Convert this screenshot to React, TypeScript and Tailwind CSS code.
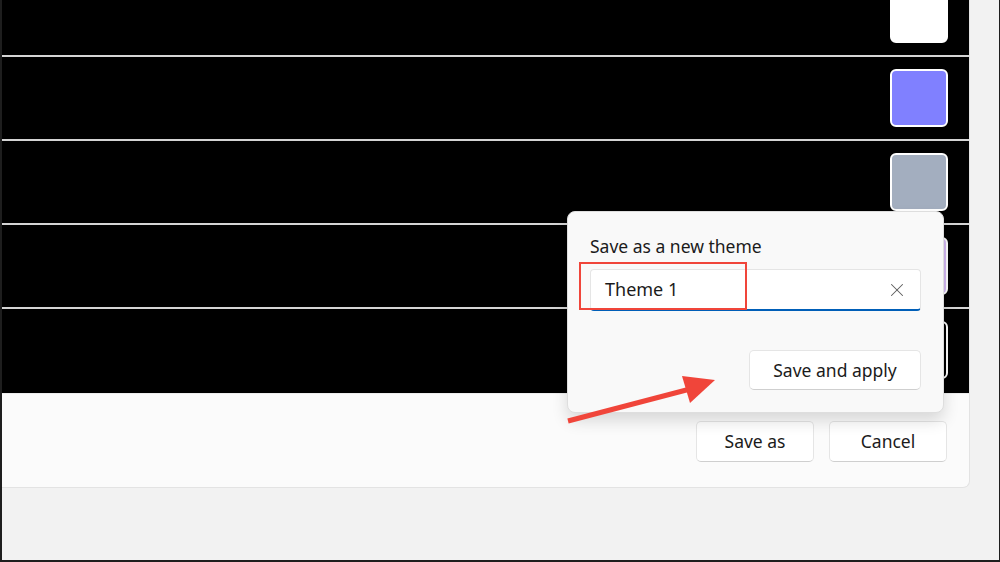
import { X } from 'lucide-react';

const swatches = ['#ffffff', '#8080ff', '#a3aebf', '#d3b8f3', '#000000'];

function Swatch({ color }: { color: string }) {
  return (
    <div
      className="w-[58px] h-[58px] shrink-0 rounded-[6px] border-2 border-white shadow-[0_1px_1px_rgba(0,0,0,0.25)]"
      style={{ backgroundColor: color }}
    />
  );
}

function Button({ label, className = '' }: { label: string; className?: string }) {
  return (
    <button
      className={`flex items-center justify-center bg-white rounded-[5px] border border-[#e5e5e5] border-b-[#cfcfcf] text-[17.5px] text-[#1b1b1b] ${className}`}
    >
      {label}
    </button>
  );
}

export default function App() {
  return (
    <div
      className="relative w-[1000px] h-[562px] overflow-hidden bg-[#f2f2f2] border-l-2 border-r border-b-2 border-[#1e1e1e] flex flex-col"
      style={{ fontFamily: '"Segoe UI", "Noto Sans", sans-serif' }}
    >
      {/* Content panel */}
      <div className="w-[968px] h-[488px] shrink-0 flex flex-col bg-[#fbfbfb] border-r border-b border-[#e3e3e3] rounded-br-[7px] overflow-hidden">
        {/* Swatch rows */}
        <div className="h-[393px] shrink-0 bg-black flex flex-col">
          <div className="h-[55px] shrink-0 flex items-end justify-end pr-[21px] pb-[12px]">
            <Swatch color={swatches[0]} />
          </div>
          {swatches.slice(1).map((c, i) => (
            <div key={c} className="flex flex-col">
              <div className="h-[2px] bg-[#d4d4d4]" />
              <div className={`${i === 3 ? 'h-[83px]' : 'h-[82px]'} flex items-start justify-end pr-[21px] pt-[12px]`}>
                <Swatch color={c} />
              </div>
            </div>
          ))}
        </div>

        {/* Footer */}
        <div className="flex-1 border-t border-[#ececec] flex justify-end gap-[15px] pt-[27px] pr-[22px]">
          <Button label="Save as" className="w-[118px] h-[41px]" />
          <Button label="Cancel" className="w-[118px] h-[41px]" />
        </div>
      </div>

      {/* Save as flyout */}
      <div className="absolute left-[565px] top-[211px] w-[377px] h-[202px] bg-[#f9f9f9] border border-[#dedede] rounded-[8px] shadow-[0_8px_16px_rgba(0,0,0,0.14)] flex flex-col px-[22px] pt-[22px]">
        <p className="text-[17.5px] leading-[24px] text-[#1b1b1b]">Save as a new theme</p>
        <div className="mt-[11px] h-[42px] bg-white rounded-[4px] border border-[#e5e5e5] border-b-2 border-b-[#005fb8] flex items-center pl-[14px] pr-[12px]">
          <span className="flex-1 text-[18px] text-[#1b1b1b]">Theme 1</span>
          <X className="w-[22px] h-[22px] text-[#5c5c5c]" strokeWidth={1.1} />
        </div>
        <div className="flex justify-end mt-[39px]">
          <Button label="Save and apply" className="w-[172px] h-[40px]" />
        </div>
      </div>

      {/* Annotation: red box */}
      <div className="absolute left-[577px] top-[262px] w-[168px] h-[48px] border-2 border-[#f0453a]" />

      {/* Annotation: red arrow */}
      <svg className="absolute left-[558px] top-[368px]" width="162" height="60" viewBox="558 368 162 60">
        <line x1="566" y1="421" x2="692" y2="388" stroke="#f0453a" strokeWidth="5" />
        <polygon points="713,380 680,376 688,403" fill="#f0453a" />
      </svg>
    </div>
  );
}
